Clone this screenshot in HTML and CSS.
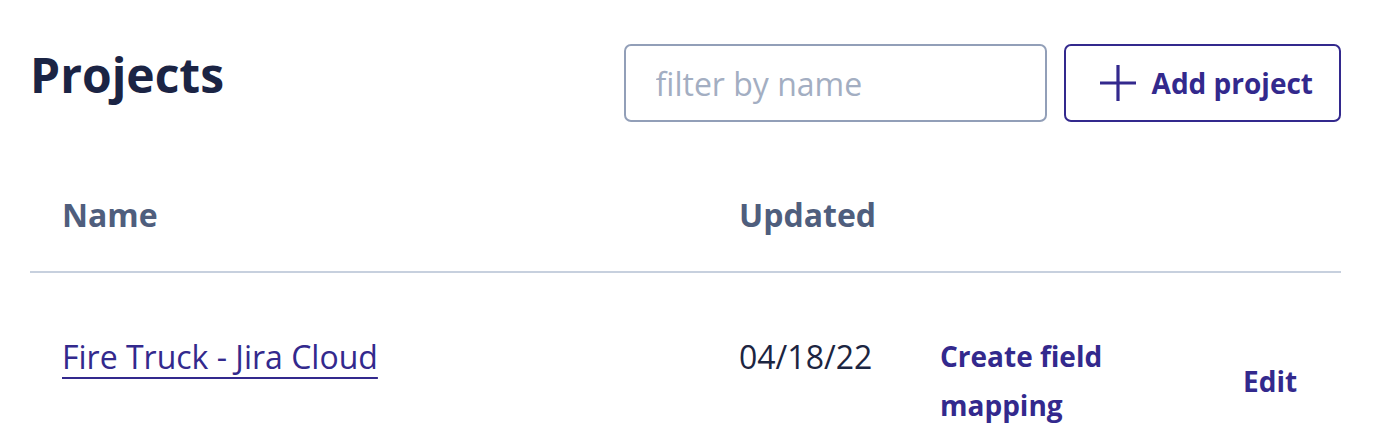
FILE: index.html
```html
<!DOCTYPE html>
<html lang="en">
<head>
  <meta charset="UTF-8">
  <meta name="viewport" content="width=device-width, initial-scale=1.0">
  <title>Projects</title>
  <link rel="stylesheet" href="styles.css">
</head>
<body>
  <div class="page">
    <header class="top">
      <h1>Projects</h1>
      <div class="tools">
        <input type="text" class="filter" placeholder="filter by name">
        <button class="add">
          <svg width="36" height="36" viewBox="0 0 36 36">
            <path d="M18 0 V36 M0 18 H36" stroke="currentColor" stroke-width="3.2" fill="none"/>
          </svg>
          Add project
        </button>
      </div>
    </header>

    <table class="projects">
      <colgroup>
        <col style="width: 677px">
        <col style="width: 201px">
        <col style="width: 303px">
        <col>
      </colgroup>
      <thead>
        <tr>
          <th>Name</th>
          <th>Updated</th>
          <th></th>
          <th></th>
        </tr>
      </thead>
      <tbody>
        <tr>
          <td><a class="name" href="#">Fire Truck - Jira Cloud</a></td>
          <td class="date">04/18/22</td>
          <td class="actions"><a class="action" href="#">Create field mapping</a></td>
          <td class="actions edit"><a class="action" href="#">Edit</a></td>
        </tr>
      </tbody>
    </table>
  </div>
</body>
</html>
```

FILE: styles.css
```css
* {
  box-sizing: border-box;
  margin: 0;
  padding: 0;
}

body {
  font-family: 'Open Sans', 'Noto Sans', sans-serif;
  color: #1c2541;
  background: #fff;
}

.page {
  padding: 44px 39px 0 30px;
}

.top {
  display: flex;
  justify-content: space-between;
  align-items: flex-start;
}

h1 {
  margin-top: 2px;
  font-size: 48px;
  line-height: 58px;
  font-weight: 700;
  color: #1b2444;
}

.tools {
  display: flex;
  gap: 17px;
}

.filter {
  width: 423px;
  height: 78px;
  padding: 0 30px;
  border: 2px solid #929fb8;
  border-radius: 7px;
  outline: none;
  font-family: inherit;
  font-size: 32px;
  color: #1c2541;
}

.filter::placeholder {
  color: #a3aec2;
}

.add {
  display: flex;
  align-items: center;
  gap: 16px;
  height: 78px;
  padding: 0 26px 0 34px;
  border: 2px solid #33298d;
  border-radius: 7px;
  background: #fff;
  color: #33298d;
  font-family: inherit;
  font-size: 28px;
  font-weight: 700;
}

.projects {
  width: 100%;
  margin-top: 36px;
  table-layout: fixed;
  border-collapse: collapse;
}

th {
  padding: 32px 32px;
  border-bottom: 2px solid #c7d0de;
  text-align: left;
  font-size: 32px;
  line-height: 49px;
  font-weight: 700;
  color: #4f5e7d;
}

td {
  padding: 59px 32px 0;
  vertical-align: top;
  font-size: 32px;
  line-height: 49px;
}

td.actions {
  font-size: 28px;
}

td.edit {
  vertical-align: middle;
}

.name {
  color: #33298d;
  text-decoration: underline;
  text-decoration-thickness: 2px;
  text-underline-offset: 8px;
}

.date {
  color: #1c2541;
}

.action {
  color: #33298d;
  font-weight: 700;
  text-decoration: none;
}
```
